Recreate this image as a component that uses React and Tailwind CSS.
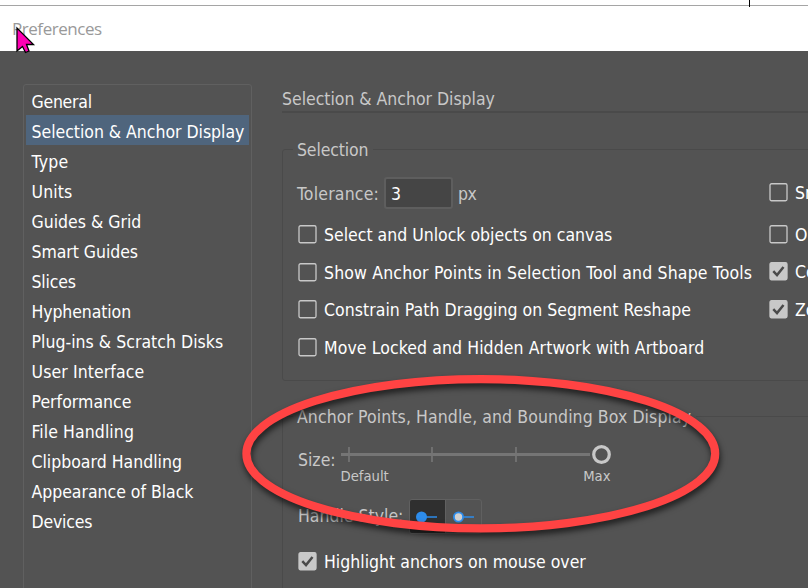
const pages = [
  { name: 'General', tracking: 'tracking-[-0.25px]' },
  { name: 'Selection & Anchor Display', tracking: 'tracking-[-0.02px]', selected: true },
  { name: 'Type', tracking: 'tracking-[0.3px]' },
  { name: 'Units', tracking: 'tracking-[0.1px]' },
  { name: 'Guides & Grid', tracking: 'tracking-normal' },
  { name: 'Smart Guides', tracking: 'tracking-[-0.05px]' },
  { name: 'Slices', tracking: 'tracking-[-0.15px]' },
  { name: 'Hyphenation', tracking: 'tracking-[-0.1px]' },
  { name: 'Plug-ins & Scratch Disks', tracking: 'tracking-[0.03px]' },
  { name: 'User Interface', tracking: 'tracking-[0.1px]' },
  { name: 'Performance', tracking: 'tracking-[0.03px]' },
  { name: 'File Handling', tracking: 'tracking-[0.08px]' },
  { name: 'Clipboard Handling', tracking: 'tracking-normal' },
  { name: 'Appearance of Black', tracking: 'tracking-[-0.02px]' },
  { name: 'Devices', tracking: 'tracking-[-0.2px]' },
]

const selectionOptions = [
  { label: 'Select and Unlock objects on canvas', tracking: 'tracking-normal' },
  { label: 'Show Anchor Points in Selection Tool and Shape Tools', tracking: 'tracking-[0.16px]' },
  { label: 'Constrain Path Dragging on Segment Reshape', tracking: 'tracking-[0.04px]' },
  { label: 'Move Locked and Hidden Artwork with Artboard', tracking: 'tracking-[0.09px]' },
]

const sideOptions = [
  { label: 'O', checked: false },
  { label: 'Co', checked: true },
  { label: 'Zo', checked: true },
]

function Checkbox({ label, checked, tracking = 'tracking-normal' }) {
  return (
    <label className="flex h-[37.5px] items-center gap-[7px] whitespace-nowrap text-white">
      <svg className="size-[19px] shrink-0" viewBox="0 0 19 19" fill="none">
        <rect x="1" y="0.75" width="17" height="17" rx="1.5" stroke="#c8c8c8" strokeWidth="1.3" fill={checked ? '#c8c8c8' : 'none'} />
        {checked && <path d="M4.3 9.2 L8 13 L14.5 5" stroke="#4a4a4a" strokeWidth="2.5" />}
      </svg>
      <span className={`pt-[1px] ${tracking}`}>{label}</span>
    </label>
  )
}

function SizeSlider() {
  return (
    <svg className="block h-[24px] w-[272px]" viewBox="0 0 272 24">
      <path d="M1 12.5 H250" stroke="#757575" strokeWidth="3" />
      <path d="M9 5 V20 M92 5 V20 M176 5 V20" stroke="#757575" strokeWidth="1.7" />
      <circle cx="261.5" cy="12.5" r="7.8" fill="none" stroke="#c8c8c8" strokeWidth="3.2" />
    </svg>
  )
}

export default function App() {
  return (
    <div className="relative flex h-[588px] w-[808px] flex-col overflow-hidden bg-[#535353] text-[17.5px] leading-[20px] font-['DejaVu_Sans_Condensed','DejaVu_Sans',sans-serif]">
      {/* Title bar */}
      <header className="h-[51px] shrink-0 bg-white">
        <div className="h-[6px] border-b border-[#a5a5a5]">
          <div className="ml-[749px] h-[7px] w-px bg-black" />
        </div>
        <h1 className="pt-[11px] pl-[12px] text-[17px] leading-[24px] tracking-[-0.45px] text-[#999999] font-['Open_Sans',sans-serif]">Preferences</h1>
      </header>

      <div className="flex min-h-0 flex-1">
        {/* Preference pages */}
        <nav className="mt-[33px] ml-[23px] h-[520px] w-[229px] shrink-0 rounded-[3px] border border-[#606060] px-[2px] text-white">
          {pages.map((page) => (
            <div key={page.name} className={`h-[30px] pt-[7px] pl-[5.5px] whitespace-nowrap ${page.tracking} ${page.selected ? 'bg-[#4f657d]' : ''}`}>
              {page.name}
            </div>
          ))}
        </nav>

        <main className="ml-[30px] w-[600px] shrink-0 pt-[38px] text-[#c8c8c8]">
          <h2 className="h-[24px] border-b-2 border-[#4a4a4a] tracking-[-0.02px]">Selection &amp; Anchor Display</h2>

          {/* Selection */}
          <section className="mt-[36px] h-[232px] rounded-[3px] border border-[#4a4a4a] pl-[10px]">
            <h3 className="-mt-[10px] w-fit bg-[#535353] pr-[5px] pl-[4px] tracking-[-0.13px]">Selection</h3>
            <div className="flex">
              <div className="w-[471px] shrink-0 pl-[5px]">
                <div className="mt-[17px] flex h-[32px] items-center">
                  <span className="-ml-px w-[87px] pt-[2px] tracking-[0.2px]">Tolerance:</span>
                  <div className="flex h-[32px] w-[69px] items-center rounded-[3px] border-2 border-[#5e5e5e] bg-[#454545] pt-[2px] pl-[5px] text-white">3</div>
                  <span className="ml-[5px] pt-[2px] tracking-[-0.4px]">px</span>
                </div>
                <div className="mt-[7px]">
                  {selectionOptions.map((option) => (
                    <Checkbox key={option.label} {...option} />
                  ))}
                </div>
              </div>
              <div className="shrink-0 pt-[14px] pl-[5px]">
                <Checkbox label="Sn" />
                <div className="mt-[4px]">
                  {sideOptions.map((option) => (
                    <Checkbox key={option.label} {...option} />
                  ))}
                </div>
              </div>
            </div>
          </section>

          {/* Anchor display */}
          <section className="mt-[35px] h-[232px] rounded-[3px] border border-[#4a4a4a] pl-[10px]">
            <h3 className="-mt-[10px] w-fit bg-[#535353] pr-[5px] pl-[4px] tracking-[0.09px]">Anchor Points, Handle, and Bounding Box Display</h3>
            <div className="mt-[15px] flex pl-[5px]">
              <span className="w-[42px] pt-[8px] tracking-normal">Size:</span>
              <div>
                <SizeSlider />
                <div className="flex justify-between pr-[1.5px] pl-[0.5px] text-[14.7px]">
                  <span>Default</span>
                  <span>Max</span>
                </div>
              </div>
            </div>
            <div className="mt-[13px] flex h-[35px] items-center pl-[5px]">
              <span className="w-[111px] pb-[2px] tracking-normal">Handle Style:</span>
              <div className="flex h-[35px] w-[73px] overflow-hidden rounded-[3px] border border-[#606060]">
                <div className="flex w-[35px] items-center bg-[#2f2f2f] pl-[5px]">
                  <svg className="h-[12px] w-[24px]" viewBox="0 0 24 12">
                    <path d="M6 6 H22" stroke="#2d8ceb" strokeWidth="1.6" />
                    <circle cx="6.5" cy="6" r="5.5" fill="#2d8ceb" />
                  </svg>
                </div>
                <div className="flex flex-1 items-center border-l border-[#606060] pl-[6px]">
                  <svg className="h-[12px] w-[24px]" viewBox="0 0 24 12">
                    <path d="M6 6 H22" stroke="#2d8ceb" strokeWidth="1.6" />
                    <circle cx="6.5" cy="6" r="4.6" fill="#d0d0d0" stroke="#2d8ceb" strokeWidth="1.8" />
                  </svg>
                </div>
              </div>
            </div>
            <div className="mt-[9px] pl-[5px]">
              <Checkbox label="Highlight anchors on mouse over" tracking="tracking-[0.02px]" checked />
            </div>
          </section>
        </main>
      </div>

      {/* Highlight ring drawn over the dialog */}
      <svg className="absolute inset-0 h-[588px] w-[808px] drop-shadow-[1px_4px_3px_rgba(0,0,0,0.65)]" viewBox="0 0 808 588">
        <ellipse cx="480.8" cy="453.7" rx="234.4" ry="74.6" fill="none" stroke="#ff4343" strokeWidth="8.2" />
      </svg>

      {/* Mouse pointer */}
      <svg className="absolute top-[26px] left-[15px] h-[30px] w-[22px]" viewBox="0 0 22 30">
        <path d="M2 2 V25 L7.5 20.5 L10.5 26.5 L14 25 L11.5 18.5 H18.5 Z" fill="#ff00b4" stroke="#000" strokeWidth="1.3" />
      </svg>
    </div>
  )
}
